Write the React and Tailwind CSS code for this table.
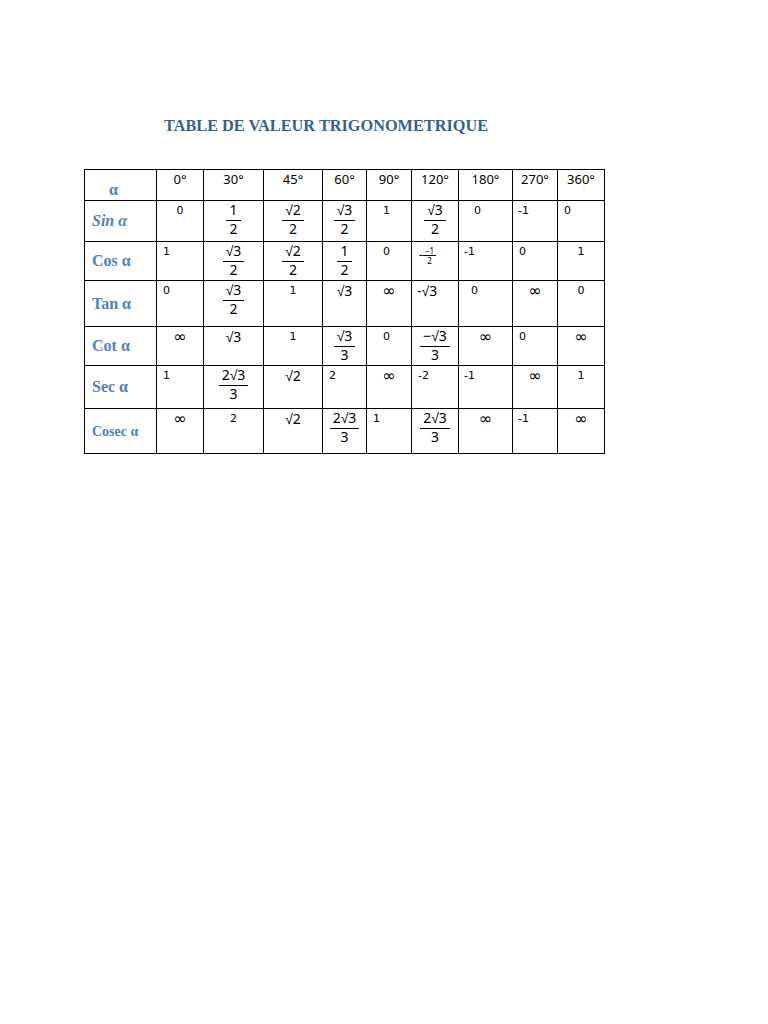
import React from "react";

const colWidths = [72, 47, 60, 59, 44, 45, 47, 54, 45, 47];
const headers = ["0°", "30°", "45°", "60°", "90°", "120°", "180°", "270°", "360°"];

// cell: { t: "n" small number | "f" fraction | "r" root text, v, a: "c" | "l", pl }
const n = (v, a = "c", pl = 0) => ({ t: "n", v, a, pl });
const f = (top, bot, a = "c", pl = 0) => ({ t: "f", top, bot, a, pl });
const r = (v, a = "c", pl = 0) => ({ t: "r", v, a, pl });

const rows = [
  {
    label: "Sin α",
    italic: true,
    h: 41,
    cells: [n("0"), f("1", "2"), f("√2", "2"), f("√3", "2"), n("1", "l", 16), f("√3", "2"), n("0", "l", 15), n("-1", "l", 5), n("0", "l", 6)],
  },
  {
    label: "Cos α",
    h: 39,
    cells: [n("1", "l", 6), f("√3", "2"), f("√2", "2"), f("1", "2"), n("0", "l", 16), { t: "m" }, n("-1", "l", 5), n("0", "l", 6), n("1")],
  },
  {
    label: "Tan α",
    h: 46,
    cells: [n("0", "l", 6), f("√3", "2"), n("1"), r("√3"), n("∞"), r("-√3", "l", 5), n("0", "l", 12), n("∞"), n("0")],
  },
  {
    label: "Cot α",
    h: 39,
    cells: [n("∞"), r("√3"), n("1"), f("√3", "3"), n("0", "l", 16), f("−√3", "3"), n("∞"), n("0", "l", 6), n("∞")],
  },
  {
    label: "Sec α",
    h: 43,
    cells: [n("1", "l", 6), f("2√3", "3"), r("√2"), n("2", "l", 6), n("∞"), n("-2", "l", 6), n("-1", "l", 5), n("∞"), n("1")],
  },
  {
    label: "Cosec α",
    small: true,
    h: 45,
    cells: [n("∞"), n("2"), r("√2"), f("2√3", "3"), n("1", "l", 6), f("2√3", "3"), n("∞"), n("-1", "l", 5), n("∞")],
  },
];

const Frac = ({ top, bot }) => (
  <div className="flex flex-col items-center text-[14px] leading-[14px] text-black">
    <span className="px-[3px] pb-[3px]">{top}</span>
    <span className="border-t border-black w-full text-center pt-[1px]">{bot}</span>
  </div>
);

const Cell = ({ c }) => {
  if (c.t === "m") {
    return (
      <div className="flex items-start pl-[7px] pt-[3px] text-black">
        <span className="text-[12px] leading-[14px] mt-[3px]">-</span>
        <div className="flex flex-col items-center text-[8px] leading-[9px] mt-[1px]">
          <span className="px-[2px]">−1</span>
          <span className="border-t border-black w-full text-center">2</span>
        </div>
      </div>
    );
  }
  const align = c.a === "c" ? "justify-center" : "justify-start";
  const inf = c.v === "∞";
  return (
    <div className={`flex items-start ${align}`} style={{ paddingLeft: c.pl }}>
      {c.t === "n" && (
        <span
          className={`text-black font-['DejaVu_Sans',sans-serif] ${
            inf ? "text-[16px] leading-[16px] pt-[2px]" : "text-[11px] leading-[14px] pt-[3px]"
          }`}
        >
          {c.v}
        </span>
      )}
      {c.t === "r" && <span className="text-[14px] leading-[16px] pt-[2px] text-black">{c.v}</span>}
      {c.t === "f" && (
        <div className="pt-[2px]">
          <Frac top={c.top} bot={c.bot} />
        </div>
      )}
    </div>
  );
};

export default function App() {
  return (
    <div className="w-[768px] h-[1024px] bg-white pt-[116px] pl-[84px] font-['Noto_Sans',sans-serif]">
      <h1 className="pl-[80px] text-[16.3px] leading-[20px] font-bold text-[#365f91] font-['Liberation_Serif',serif]">
        TABLE DE VALEUR TRIGONOMETRIQUE
      </h1>
      <table className="mt-[33px] border-collapse table-fixed" style={{ width: 520 }}>
        <colgroup>
          {colWidths.map((w, i) => (
            <col key={i} style={{ width: w }} />
          ))}
        </colgroup>
        <tbody>
          <tr>
            <td className="border border-black p-0 align-top h-[31px]">
              <div className="pl-[24px] pt-[11px] text-[16px] leading-[18px] font-bold text-[#4f81bd] font-['Liberation_Serif',serif]">
                α
              </div>
            </td>
            {headers.map((h) => (
              <td key={h} className="border border-black p-0 align-top h-[31px]">
                <div className="text-center text-[13px] leading-[16px] pt-[1px] text-black">{h}</div>
              </td>
            ))}
          </tr>
          {rows.map((row) => (
            <tr key={row.label}>
              <td className="border border-black p-0 align-middle" style={{ height: row.h }}>
                <div
                  className={`pl-[7px] font-bold text-[#4f81bd] font-['Liberation_Serif',serif] ${
                    row.italic ? "italic" : ""
                  } ${row.small ? "text-[14px]" : "text-[16px]"}`}
                >
                  {row.label}
                </div>
              </td>
              {row.cells.map((c, i) => (
                <td key={i} className="border border-black p-0 align-top" style={{ height: row.h }}>
                  <Cell c={c} />
                </td>
              ))}
            </tr>
          ))}
        </tbody>
      </table>
    </div>
  );
}
